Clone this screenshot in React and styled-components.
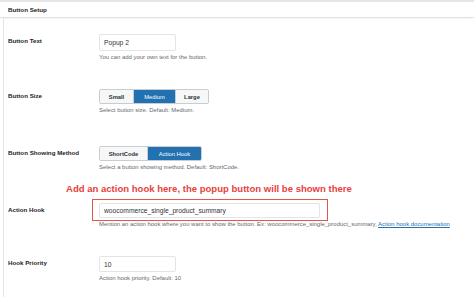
import React from "react";
import styled, { createGlobalStyle } from "styled-components";

const GlobalStyle = createGlobalStyle`
  html, body {
    margin: 0;
    padding: 0;
    background: #ffffff;
    font-family: "Liberation Sans", Arial, sans-serif;
  }
`;

const Page = styled.div`
  width: 474px;
  height: 297px;
  overflow: hidden;
  border-top: 2px solid #e6e6e6;
  box-sizing: border-box;
`;

const Header = styled.div`
  height: 15px;
  display: flex;
  align-items: center;
  padding-left: 8px;
  font-size: 6.2px;
  font-weight: 700;
  color: #1d2327;
  border-bottom: 1.5px solid #e2e2e2;
  box-shadow: 0 4px 0 -3px #f4f4f4;
`;

const Body = styled.div`
  margin-left: 3px;
  border-left: 1px solid #e4e4e4;
  height: 100%;
`;

const Row = styled.div`
  position: relative;
  display: grid;
  grid-template-columns: 95px 1fr;
  height: ${(p) => p.$h}px;
  padding-top: ${(p) => p.$top || 16}px;
  box-sizing: border-box;
`;

const Label = styled.div`
  padding-left: 4px;
  font-size: 6.2px;
  font-weight: 700;
  color: #1d2327;
  line-height: 14px;
`;

const Field = styled.div`
  display: flex;
  flex-direction: column;
  align-items: flex-start;
`;

const Input = styled.div`
  width: ${(p) => p.$w}px;
  height: ${(p) => p.$hh || 17}px;
  box-sizing: border-box;
  border: 1px solid #e3e4e6;
  border-radius: 2px;
  display: flex;
  align-items: center;
  padding-left: 4px;
  font-size: 6.7px;
  color: #2c3338;
  background: #fff;
`;

const Help = styled.div`
  margin-top: 3px;
  font-size: 5.95px;
  color: #646970;
  white-space: nowrap;

  a {
    color: #2271b1;
    text-decoration: underline;
  }
`;

const Group = styled.div`
  display: flex;
  height: 15px;
  border: 1px solid #c9ccd0;
  border-radius: 2px;
  box-sizing: border-box;
  overflow: hidden;
`;

const Toggle = styled.div`
  width: ${(p) => p.$w}px;
  box-sizing: border-box;
  display: flex;
  align-items: center;
  justify-content: center;
  font-size: 5.8px;
  font-weight: ${(p) => (p.$active ? 400 : 700)};
  color: ${(p) => (p.$active ? "#ffffff" : "#2c3338")};
  background: ${(p) => (p.$active ? "#2271b1" : "#f6f7f7")};
  & + & {
    border-left: 1px solid #c9ccd0;
  }
`;

const Note = styled.div`
  position: absolute;
  left: 62px;
  top: -3px;
  font-size: 9.55px;
  font-weight: 700;
  color: #e8403a;
  white-space: nowrap;
`;

const Marked = styled.div`
  position: relative;
  &::before {
    content: "";
    position: absolute;
    inset: -4px -8px -3px -7px;
    border: 1.5px solid #e8544c;
    pointer-events: none;
  }
`;

export default function App() {
  return (
    <>
      <GlobalStyle />
      <Page>
        <Header>Button Setup</Header>
        <Body>
          <Row $h={55}>
            <Label>Button Text</Label>
            <Field>
              <Input $w={77}>Popup 2</Input>
              <Help>You can add your own text for the button.</Help>
            </Field>
          </Row>
          <Row $h={57}>
            <Label>Button Size</Label>
            <Field>
              <Group>
                <Toggle $w={33}>Small</Toggle>
                <Toggle $w={42} $active>Medium</Toggle>
                <Toggle $w={33}>Large</Toggle>
              </Group>
              <Help>Select button size. Default: Medium.</Help>
            </Field>
          </Row>
          <Row $h={56}>
            <Label>Button Showing Method</Label>
            <Field>
              <Group>
                <Toggle $w={47}>ShortCode</Toggle>
                <Toggle $w={54} $active>Action Hook</Toggle>
              </Group>
              <Help>Select a button showing method. Default: ShortCode.</Help>
            </Field>
          </Row>
          <Row $h={54} $top={17}>
            <Note>Add an action hook here, the popup button will be shown there</Note>
            <Label>Action Hook</Label>
            <Field>
              <Marked>
                <Input $w={221} $hh={15}>woocommerce_single_product_summary</Input>
              </Marked>
              <Help>
                Mention an action hook where you want to show the button. Ex:
                woocommerce_single_product_summary,{" "}
                <a href="#">Action hook documentation</a>
              </Help>
            </Field>
          </Row>
          <Row $h={60}>
            <Label>Hook Priority</Label>
            <Field>
              <Input $w={77} $hh={16}>10</Input>
              <Help>Action hook priority. Default: 10</Help>
            </Field>
          </Row>
        </Body>
      </Page>
    </>
  );
}
